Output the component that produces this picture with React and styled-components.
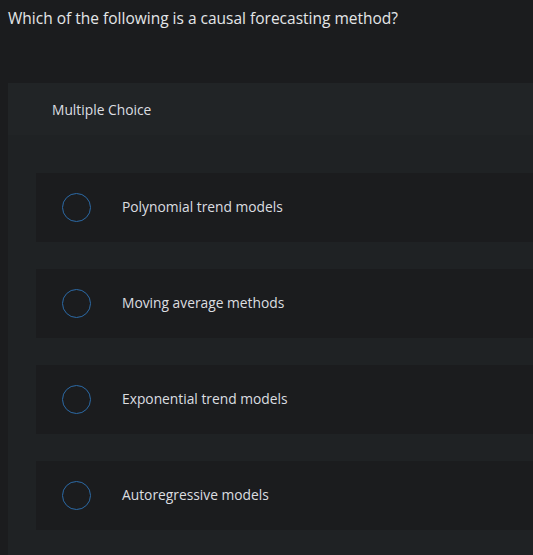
import React from 'react';
import styled, { createGlobalStyle } from 'styled-components';

const GlobalStyle = createGlobalStyle`
  html, body {
    margin: 0;
    background: #1b1c1e;
    overflow: hidden;
  }
  body {
    padding: 8px 0 0 8px;
    font-family: 'Open Sans', Lato, sans-serif;
    color: #e2e4e6;
  }
`;

const Question = styled.p`
  margin: 0;
  height: 75px;
  font-size: 15.5px;
  line-height: 20px;
  color: #e4e6e8;
`;

const Panel = styled.section`
  background: #1f2224;
  min-height: 472px;
`;

const PanelHeader = styled.div`
  height: 52px;
  display: flex;
  align-items: center;
  padding-left: 44px;
  background: #212426;
  font-size: 13.8px;
  color: #dcdee0;
`;

const Options = styled.div`
  display: flex;
  flex-direction: column;
  gap: 27px;
  padding: 38px 0 0 28px;
`;

const OptionCard = styled.label`
  height: 69px;
  display: flex;
  align-items: center;
  background: #1b1c1e;
  font-size: 13.8px;
  line-height: 18px;
  color: #dcdee0;
`;

const Radio = styled.span`
  box-sizing: border-box;
  width: 29px;
  height: 29px;
  margin: 0 31px 0 26px;
  border: 1.5px solid #2c6aa6;
  border-radius: 50%;
`;

const Label = styled.span`
  margin-top: -2px;
`;

const options = [
  'Polynomial trend models',
  'Moving average methods',
  'Exponential trend models',
  'Autoregressive models',
];

export default function App() {
  return (
    <>
      <GlobalStyle />
      <Question>Which of the following is a causal forecasting method?</Question>
      <Panel>
        <PanelHeader>Multiple Choice</PanelHeader>
        <Options>
          {options.map((text) => (
            <OptionCard key={text}>
              <Radio />
              <Label>{text}</Label>
            </OptionCard>
          ))}
        </Options>
      </Panel>
    </>
  );
}
